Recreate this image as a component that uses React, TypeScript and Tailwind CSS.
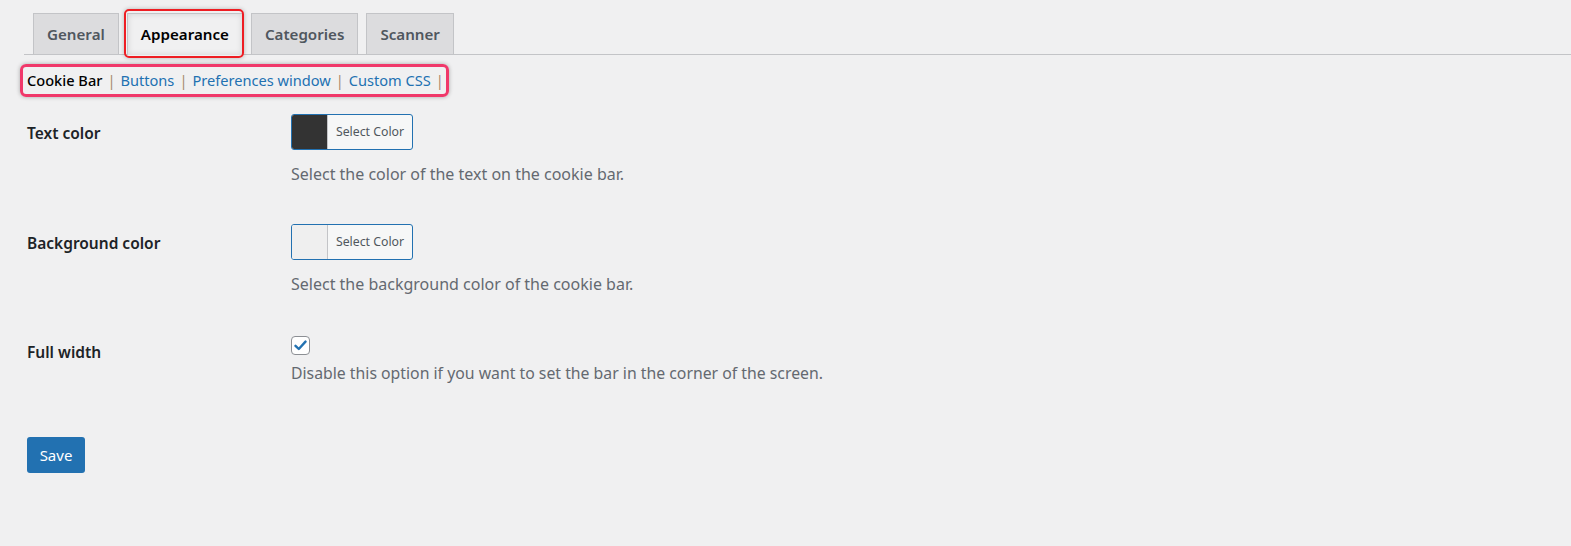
import React from "react";

const font = { fontFamily: '"Noto Sans", "Open Sans", Arial, sans-serif' };

function ColorButton({ swatch }: { swatch: string }) {
  return (
    <button
      type="button"
      className="flex h-[36px] w-[122px] items-stretch overflow-hidden rounded-[3px] border border-[#2271b1] bg-[#f6f7f7] p-0"
    >
      <span className={`block w-[36px] border-r border-[#c3c4c7] ${swatch}`} />
      <span className="flex flex-1 items-center justify-center text-[12.3px] text-[#50575e]">Select Color</span>
    </button>
  );
}

export default function App() {
  const tabs = ["General", "Appearance", "Categories", "Scanner"];
  return (
    <div className="min-h-[546px] w-full bg-[#f0f0f1] text-[#1d2327]" style={font}>
      <div className="pt-[13px] pl-[24px]">
        <div className="flex items-end gap-[8px] border-b border-[#c3c4c7] pl-[9px]">
          {tabs.map((t) =>
            t === "Appearance" ? (
              <div key={t} className="relative -mb-px">
                <div className="pointer-events-none absolute -left-[3px] -right-[1px] -top-[4px] -bottom-[3px] rounded-[5px] border-2 border-[#ee1d23] shadow-[0_0_4px_rgba(0,0,0,0.25)]" />
                <div className="flex h-[42px] items-center border border-b-0 border-[#c3c4c7] bg-[#f0f0f1] px-[13px] text-[15.15px] font-semibold text-black shadow-[inset_0_0_6px_rgba(0,0,0,0.12)]">
                  {t}
                </div>
              </div>
            ) : (
              <div
                key={t}
                className="-mb-px flex h-[42px] items-center border border-[#c3c4c7] bg-[#dcdcde] px-[13px] text-[15.15px] font-semibold text-[#50575e]"
              >
                {t}
              </div>
            )
          )}
        </div>
      </div>

      <div className="pl-[20px] pt-[9px]">
        <div className="inline-flex h-[33px] items-center rounded-[6px] border-[3px] border-[#f0386a] pl-[4px] pr-[2px] text-[14.6px] shadow-[0_0_4px_rgba(0,0,0,0.3)]">
          <span className="font-medium text-black">Cookie Bar</span>
          <span className="mx-[5px] text-[#a68a6d]">|</span>
          <a className="text-[#2271b1]">Buttons</a>
          <span className="mx-[5px] text-[#a68a6d]">|</span>
          <a className="text-[#2271b1]">Preferences window</a>
          <span className="mx-[5px] text-[#a68a6d]">|</span>
          <a className="text-[#2271b1]">Custom CSS</a>
          <span className="ml-[5px] text-[#a68a6d]">|</span>
        </div>
      </div>

      <div className="pl-[27px] pt-[17px]">
        <div className="flex">
          <div className="w-[264px] pt-[8px] text-[15.5px] font-semibold text-[#1d2327]">Text color</div>
          <div>
            <ColorButton swatch="bg-[#333333]" />
            <p className="mt-[13px] text-[16px] leading-[22px] text-[#646970]">
              Select the color of the text on the cookie bar.
            </p>
          </div>
        </div>

        <div className="mt-[39px] flex">
          <div className="w-[264px] pt-[8px] text-[15.5px] font-semibold text-[#1d2327]">Background color</div>
          <div>
            <ColorButton swatch="bg-[#efefef]" />
            <p className="mt-[13px] text-[16px] leading-[22px] text-[#646970]">
              Select the background color of the cookie bar.
            </p>
          </div>
        </div>

        <div className="mt-[41px] flex">
          <div className="w-[264px] pt-[5px] text-[15.5px] font-semibold text-[#1d2327]">Full width</div>
          <div>
            <span className="flex h-[19px] w-[19px] items-center justify-center rounded-[4px] border border-[#8c8f94] bg-white">
              <svg width="13" height="11" viewBox="0 0 13 11">
                <path d="M1.5 5.8 L4.8 9 L11.5 1.6" fill="none" stroke="#2271b1" strokeWidth="2.4" strokeLinecap="round" strokeLinejoin="round" />
              </svg>
            </span>
            <p className="mt-[7px] text-[15.8px] leading-[22px] text-[#646970]">
              Disable this option if you want to set the bar in the corner of the screen.
            </p>
          </div>
        </div>

        <button
          type="button"
          className="mt-[53px] flex h-[36px] w-[58px] items-center justify-center rounded-[3px] bg-[#2271b1] text-[15px] text-white"
        >
          Save
        </button>
      </div>
    </div>
  );
}
